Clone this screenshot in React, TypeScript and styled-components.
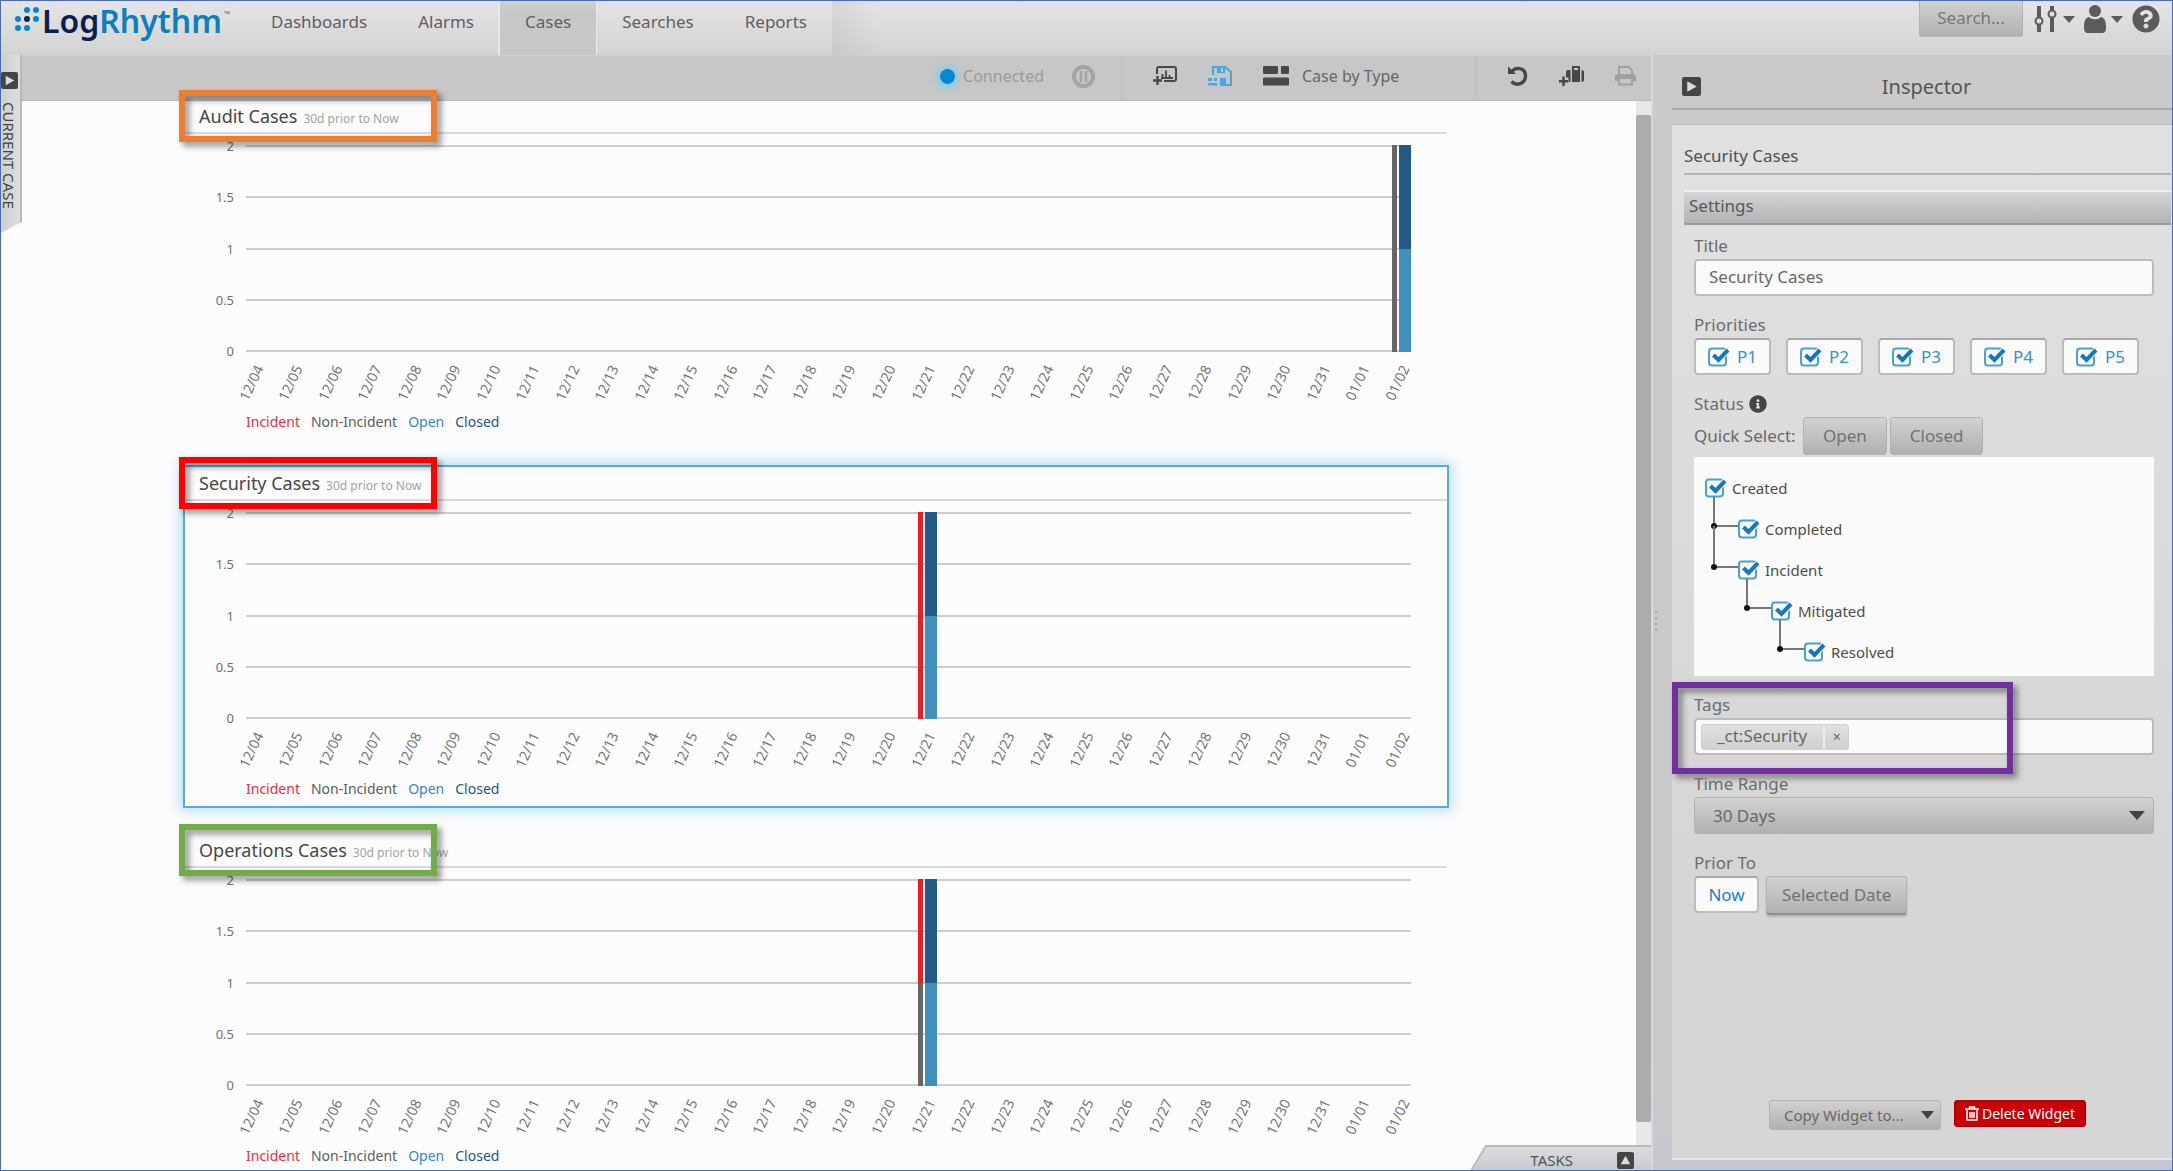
import React, { useState } from 'react';
import styled, { createGlobalStyle, css } from 'styled-components';
import { FaInfoCircle, FaQuestionCircle } from 'react-icons/fa';

const GlobalStyle = createGlobalStyle`
  *, *::before, *::after { box-sizing: border-box; }
  body { margin: 0; }
  body, button, input, select {
    font-family: "Noto Sans", "Open Sans", sans-serif;
    font-size: 17px;
    color: #686868;
  }
  h1, h2, h3, ul { margin: 0; padding: 0; font-weight: 400; }
  ul { list-style: none; }
  button, select { cursor: pointer; }
`;

const raised = css`
  border: 1px solid #b2b2b2;
  border-radius: 3px;
  background: linear-gradient(#d2d2d2, #b1b1b1);
`;

const Frame = styled.div`
  display: flex;
  flex-direction: column;
  height: 100vh;
  overflow: hidden;
  border: 1px solid #4b6bb0;
  background: #fcfcfc;
`;

/* ---------- header ---------- */

const Header = styled.header`
  display: flex;
  flex: none;
  height: 54px;
  background: linear-gradient(#dfdff4, #e3e2e2 14%, #d3d3d3);
`;

const Logo = styled.a`
  display: flex;
  align-items: flex-start;
  gap: 2px;
  width: 245px;
  padding: 5px 0 0 13px;
  font-size: 32px;
  line-height: 30px;
  font-weight: 600;
  color: #0d1f4d;
  text-decoration: none;
`;

const LogoAccent = styled.span`
  color: #0a7fc4;
`;

const LogoMark = styled.span`
  font-size: 8px;
  line-height: 16px;
  font-weight: 400;
  color: #0a7fc4;
`;

const Nav = styled.nav`
  display: flex;
  gap: 1px;
`;

const NavTab = styled.a<{ $active?: boolean }>`
  padding: 0 25px;
  font-size: 17px;
  line-height: 42px;
  color: #5f5f5f;
  text-decoration: none;
  ${({ $active }) =>
    $active &&
    css`
      background: linear-gradient(#d0d0d4, #c8c8c8 20%);
      box-shadow: -2px 0 #e8e8e8, 1px 0 #e8e8e8;
    `}
`;

const NavFade = styled.div`
  width: 46px;
  background: linear-gradient(90deg, rgba(0, 0, 0, 0.05), transparent);
`;

const HeaderTools = styled.div`
  display: flex;
  align-items: flex-start;
  margin-left: auto;
  padding-right: 12px;
`;

const SearchButton = styled.button`
  ${raised};
  width: 104px;
  height: 36px;
  margin-right: 11px;
  padding-bottom: 3px;
  border-top: 0;
  border-radius: 0 0 3px 3px;
  font-size: 17px;
  color: #777;
`;

const ToolButton = styled.button`
  display: flex;
  align-items: center;
  gap: 5px;
  margin-right: 9px;
  padding: 4px 0 0;
  border: 0;
  background: none;
  color: #5b5b5b;
  &:last-child { margin-right: 0; }
`;

/* ---------- workspace ---------- */

const Body = styled.div`
  display: flex;
  flex: 1;
  min-height: 0;
`;

const Workspace = styled.main`
  position: relative;
  display: flex;
  flex: 1;
  flex-direction: column;
  min-width: 0;
`;

const Toolbar = styled.div`
  display: flex;
  flex: none;
  justify-content: flex-end;
  height: 46px;
  border-top: 1px solid #cfcfcf;
  border-bottom: 1px solid #b9b9b9;
  background: #c7c7c7;
`;

const ToolGroup = styled.div<{ $wide?: boolean }>`
  display: flex;
  align-items: center;
  gap: 31px;
  width: ${({ $wide }) => ($wide ? 355 : 175)}px;
  padding: 0 14px 4px 31px;
  border-left: 1px solid #bdbdbd;
`;

const Connection = styled.div`
  display: flex;
  align-items: center;
  gap: 8px;
  padding: 0 26px 4px 0;
  font-size: 16px;
  color: #9b9b9b;
`;

const StatusDot = styled.span`
  width: 15px;
  height: 15px;
  border-radius: 50%;
  background: #0787cf;
  box-shadow: 0 0 7px 4px #8ccbea;
`;

const IconButton = styled.button<{ $faded?: boolean; $accent?: boolean }>`
  display: flex;
  padding: 0;
  border: 0;
  background: none;
  color: ${({ $faded, $accent }) => ($accent ? '#48a8e4' : $faded ? '#a0a0a0' : '#484848')};
`;

const PauseButton = styled(IconButton)`
  margin-left: 20px;
`;

const LayoutButton = styled(IconButton)`
  align-items: center;
  gap: 13px;
  font-size: 16px;
  color: #484848;
  span { color: #666; }
`;

const Canvas = styled.div`
  display: flex;
  flex: 1;
  min-height: 0;
`;

const WidgetColumn = styled.div`
  flex: 1;
  min-width: 0;
  margin-top: -3px;
  padding: 0 187px 0 182px;
`;

const ScrollTrack = styled.div`
  width: 15px;
  padding: 14px 0 48px;
  background: #e8e8e8;
`;

const ScrollThumb = styled.div`
  height: 100%;
  border-radius: 2px;
  background: #aeabae;
`;

/* ---------- side and bottom tabs ---------- */

const CaseTab = styled.button`
  position: absolute;
  top: 0;
  left: 0;
  display: flex;
  align-items: center;
  gap: 13px;
  width: 21px;
  height: 178px;
  padding: 17px 3px 0 0;
  border: 0;
  border-right: 2px solid #b8b8b8;
  background: linear-gradient(90deg, #cfcfcf, #dedede);
  clip-path: polygon(0 0, 100% 0, 100% 167px, 0 100%);
  writing-mode: vertical-rl;
  font-size: 15px;
  line-height: 16px;
  color: #444;
  svg { flex: none; }
`;

const TasksEdge = styled.div`
  position: absolute;
  right: 0;
  bottom: 0;
  padding: 2px 0 0 2px;
  background: #b9b9b9;
  clip-path: polygon(15px 0, 100% 0, 100% 100%, 0 100%);
`;

const TasksTab = styled.button`
  display: flex;
  align-items: center;
  gap: 44px;
  height: 23px;
  padding: 3px 17px 0 58px;
  border: 0;
  background: linear-gradient(#dcdcdc, #c9c9d6);
  clip-path: polygon(14px 0, 100% 0, 100% 100%, 0 100%);
  font-size: 15px;
  line-height: 20px;
  color: #555;
`;

/* ---------- chart widget ---------- */

const WidgetBox = styled.section<{ $selected?: boolean }>`
  position: relative;
  height: 343px;
  margin-bottom: 24px;
  border: 2px solid ${({ $selected }) => ($selected ? '#55addf' : 'transparent')};
  box-shadow: ${({ $selected }) => ($selected ? '0 0 12px 3px #b4def4' : 'none')};
`;

const WidgetHeader = styled.header`
  display: flex;
  align-items: baseline;
  gap: 6px;
  height: 34px;
  padding: 3px 0 0 14px;
  border-bottom: 2px solid #d9d9d9;
`;

const WidgetTitle = styled.h2`
  font-size: 18px;
  line-height: 26px;
  color: #474747;
`;

const WidgetNote = styled.span`
  font-size: 12px;
  color: #a3a3a3;
`;

const Chart = styled.div`
  display: grid;
  grid-template-columns: 61px 1fr;
  grid-template-rows: 207px 61px auto;
  padding: 11px 36px 0 0;
`;

const YAxis = styled.div`
  display: flex;
  flex-direction: column;
  justify-content: space-between;
  margin: -8px 0;
  padding-right: 12px;
  font-size: 13px;
  line-height: 18px;
  text-align: right;
  color: #707070;
`;

const Plot = styled.div`
  display: grid;
  > * { grid-area: 1 / 1; }
`;

const GridLines = styled.div`
  display: flex;
  flex-direction: column;
  justify-content: space-between;
`;

const GridLine = styled.div`
  height: 2px;
  background: #cdcdcd;
`;

const Days = styled.div`
  display: flex;
  justify-content: space-between;
`;

const DayBars = styled.div`
  display: flex;
  align-items: stretch;
  gap: 2px;
  width: 19px;
`;

const Stack = styled.div<{ $narrow?: boolean }>`
  display: flex;
  flex-direction: column;
  width: ${({ $narrow }) => ($narrow ? 5 : 12)}px;
`;

const Bar = styled.div<{ $color: string; $value: number }>`
  flex: ${({ $value }) => $value};
  background: ${({ $color }) => $color};
`;

const XLabels = styled(Days)`
  grid-column: 2;
  padding-top: 5px;
`;

const XLabel = styled.div`
  display: flex;
  justify-content: flex-end;
  width: 19px;
  padding-right: 6px;
  font-size: 14px;
  line-height: 18px;
  color: #757575;
  span {
    flex: none;
    align-self: flex-start;
    transform: rotate(-65deg);
    transform-origin: 100% 50%;
  }
`;

const Legend = styled.div`
  display: flex;
  grid-column: 2;
  gap: 11px;
  font-size: 14px;
  line-height: 18px;
`;

const LegendItem = styled.span<{ $color: string }>`
  color: ${({ $color }) => $color};
`;

const Callout = styled.div<{ $color: string }>`
  position: absolute;
  top: -10px;
  left: -6px;
  width: 258px;
  height: 52px;
  border: 6px solid ${({ $color }) => $color};
  filter: drop-shadow(4px 4px 3px rgba(0, 0, 0, 0.45));
  pointer-events: none;
`;

/* ---------- inspector ---------- */

const InspectorPane = styled.aside`
  position: relative;
  display: flex;
  flex: none;
  flex-direction: column;
  width: 521px;
  padding: 0 0 10px 19px;
  border-left: 2px solid #d9d9d9;
  background: linear-gradient(#cacaca, #cacaca 90%, #c6c6d0);
`;

const SplitGrip = styled.div`
  position: absolute;
  top: 556px;
  left: 2px;
  width: 2px;
  height: 22px;
  background: repeating-linear-gradient(#a8a8a8 0 2px, transparent 2px 6px);
`;

const InspectorHeader = styled.header`
  display: flex;
  align-items: center;
  height: 55px;
  padding: 10px 20px 0 10px;
  border-bottom: 2px solid #acacac;
`;

const InspectorTitle = styled.h1`
  flex: 1;
  font-size: 20px;
  line-height: 28px;
  text-align: center;
  color: #555;
`;

const Panel = styled.div`
  display: flex;
  flex: 1;
  flex-direction: column;
  margin-top: 14px;
  padding: 19px 1px 28px 12px;
  border-top: 1px solid #bbb;
  border-bottom: 2px solid #e6e6e6;
  background: linear-gradient(#e1e1e1, #d6d6d6 70%);
`;

const PanelTitle = styled.h2`
  padding-bottom: 5px;
  border-bottom: 2px solid #b4b4b4;
  font-size: 17px;
  line-height: 24px;
  color: #505050;
`;

const SectionBar = styled.h3`
  height: 35px;
  margin-top: 15px;
  padding-left: 5px;
  border-top: 2px solid #ededed;
  border-bottom: 2px solid #9d9d9d;
  background: linear-gradient(#d6d6d6, #b2b2b2);
  font-size: 17px;
  line-height: 27px;
  color: #585858;
`;

const Form = styled.div`
  display: flex;
  flex-direction: column;
  gap: 17px;
  padding: 9px 17px 0 10px;
`;

const Field = styled.div`
  position: relative;
`;

const FieldLabel = styled.label`
  display: flex;
  align-items: center;
  gap: 5px;
  height: 25px;
  padding-bottom: 2px;
  color: #6c6c6c;
`;

const box = css`
  width: 100%;
  height: 37px;
  border: 2px solid #bcbcbc;
  border-radius: 4px;
  background: #fafafa;
`;

const TextInput = styled.input`
  ${box};
  padding: 0 13px 2px;
`;

const PriorityRow = styled.div`
  display: flex;
  gap: 15px;
`;

const PriorityBox = styled.label`
  ${box};
  display: flex;
  align-items: center;
  gap: 7px;
  width: 77px;
  padding-left: 12px;
  border-top-color: #a8a8a8;
  color: #3991c9;
`;

const CheckWrap = styled.span`
  display: grid;
  flex: none;
  width: 22px;
  height: 20px;
  > * { grid-area: 1 / 1; margin: 0; }
  input { width: 20px; height: 20px; opacity: 0; }
`;

const QuickRow = styled.div`
  display: flex;
  align-items: center;
  gap: 3px;
  height: 38px;
  margin-bottom: 2px;
`;

const QuickLabel = styled.span`
  width: 106px;
  padding-bottom: 2px;
`;

const GreyButton = styled.button`
  ${raised};
  height: 38px;
  padding: 0 19px 1px;
  font-size: 17px;
  color: #727272;
`;

const NowButton = styled.button`
  ${box};
  width: 65px;
  border-top-color: #a8a8a8;
  color: #1583c9;
`;

const DateButton = styled(GreyButton)`
  height: 39px;
  padding: 0 15px 1px;
  border-bottom: 2px solid #8d8d8d;
  box-shadow: 0 2px 2px rgba(0, 0, 0, 0.15);
`;

const ButtonRow = styled.div`
  display: flex;
  gap: 7px;
`;

const TreeBox = styled.div`
  height: 219px;
  padding: 10px 11px;
  background: #fafafa;
`;

const TreeList = styled.ul`
  & & { padding-left: 33px; }
`;

const TreeItem = styled.li`
  position: relative;
  & &::before {
    content: "";
    position: absolute;
    top: -11px;
    left: -25px;
    width: 25px;
    height: 30px;
    border: solid #777;
    border-width: 0 0 2px 2px;
  }
  & & + &::before { top: -23px; height: 42px; }
  & &::after {
    content: "";
    position: absolute;
    top: 15px;
    left: -27px;
    width: 6px;
    height: 6px;
    border-radius: 50%;
    background: #111;
  }
`;

const TreeRow = styled.label`
  display: flex;
  align-items: center;
  gap: 5px;
  height: 41px;
  font-size: 15px;
  color: #4c4c4c;
`;

const TagBox = styled.div`
  ${box};
  display: flex;
  align-items: center;
  padding-left: 5px;
`;

const Tag = styled.span`
  display: flex;
  height: 26px;
  border: 1px solid #d0d0d0;
  border-radius: 3px;
  background: linear-gradient(#e0e0e0, #d0d0d0);
  line-height: 22px;
  padding-left: 15px;
`;

const TagRemove = styled.button`
  width: 25px;
  margin-left: 16px;
  padding: 0;
  border: 0;
  border-left: 2px solid #ebebeb;
  background: none;
  font-size: 14px;
  line-height: 23px;
`;

const TagInput = styled.input`
  flex: 1;
  min-width: 0;
  border: 0;
  outline: 0;
  background: none;
`;

const TagCallout = styled(Callout)`
  top: -11px;
  left: -22px;
  width: 341px;
  height: 92px;
`;

const SelectWrap = styled.div<{ $small?: boolean }>`
  display: grid;
  align-items: center;
  width: ${({ $small }) => ($small ? '172px' : '100%')};
  > * { grid-area: 1 / 1; }
  svg {
    justify-self: end;
    margin-right: ${({ $small }) => ($small ? 7 : 9)}px;
    pointer-events: none;
  }
  select {
    ${raised};
    appearance: none;
    width: 100%;
    height: ${({ $small }) => ($small ? 30 : 37)}px;
    padding: 0 30px 0 ${({ $small }) => ($small ? 14 : 18)}px;
    font-size: ${({ $small }) => ($small ? 15 : 17)}px;
  }
`;

const Actions = styled.div`
  display: flex;
  align-items: flex-start;
  gap: 13px;
  margin-top: auto;
  padding-left: 85px;
`;

const DeleteButton = styled.button`
  display: flex;
  align-items: center;
  gap: 3px;
  height: 27px;
  padding: 0 10px;
  border: 1px solid #a80000;
  border-radius: 3px;
  background: #cb0000;
  font-size: 14px;
  color: #fff;
`;

/* ---------- drawings ---------- */

const LogoDots = () => (
  <svg width="26" height="26" viewBox="0 0 26 26" fill="#0a86c8" aria-hidden="true">
    <circle cx="13" cy="4" r="3" />
    <circle cx="22" cy="4" r="3" />
    <circle cx="4" cy="13" r="3" />
    <circle cx="13" cy="13" r="3" fill="#0d1f4d" />
    <circle cx="22" cy="13" r="3" />
    <circle cx="4" cy="22" r="3" />
    <circle cx="13" cy="22" r="3" />
  </svg>
);

const Caret = ({ w = 12, h = 7, color = 'currentColor' }: { w?: number; h?: number; color?: string }) => (
  <svg width={w} height={h} viewBox="0 0 12 7" preserveAspectRatio="none" aria-hidden="true">
    <path d="M0 0h12L6 7z" fill={color} />
  </svg>
);

const SlidersIcon = () => (
  <svg width="24" height="28" viewBox="0 0 24 28" fill="none" stroke="currentColor" aria-hidden="true">
    <path d="M5 1v11M5 20v7M18 1v4M18 12v15" strokeWidth="4" />
    <circle cx="5" cy="16" r="3.500" strokeWidth="2" fill="#ddd" />
    <circle cx="18" cy="9" r="3.500" strokeWidth="2" fill="#ddd" />
  </svg>
);

const UserIcon = () => (
  <svg width="22" height="28" viewBox="0 0 22 28" fill="currentColor" aria-hidden="true">
    <circle cx="11" cy="6" r="6" />
    <path d="M5 12c3 3 9 3 12 0 4 1 5 5 5 10 0 4-1 6-4 6H4c-3 0-4-2-4-6 0-5 1-9 5-10z" />
  </svg>
);

const PlayBox = ({ up, size = 19 }: { up?: boolean; size?: number }) => (
  <svg width={size} height={size} viewBox="0 0 18 18" aria-hidden="true">
    <rect width="18" height="18" rx="2" fill="#454545" />
    <path d={up ? 'M4 13h10L9 4z' : 'M5 4v10l9-5z'} fill="#dcdcdc" />
  </svg>
);

const PauseIcon = () => (
  <svg width="23" height="23" viewBox="0 0 23 23" aria-hidden="true">
    <circle cx="11.5" cy="11.5" r="9.5" fill="none" stroke="#a4a4a4" strokeWidth="4" />
    <path d="M9 6v11M14 6v11" stroke="#a4a4a4" strokeWidth="2.6" />
  </svg>
);

const AddWidgetIcon = () => (
  <svg width="24" height="20" viewBox="0 0 24 20" fill="none" stroke="currentColor" strokeWidth="2" aria-hidden="true">
    <path d="M4 8V3q0-2 2-2h15q2 0 2 2v10q0 2-2 2H11" />
    <path d="M0 14.5h9M4.500 10v9" strokeWidth="2.4" />
    <path d="M9.500 12V8M13 12V4.500M16.500 12V9M8 12h12" strokeWidth="1.800" />
  </svg>
);

const SaveIcon = () => (
  <svg width="24" height="20" viewBox="0 0 24 20" aria-hidden="true">
    <path d="M5 9V1h12l6 5v13H12" fill="none" stroke="currentColor" strokeWidth="2.200" />
    <path d="M9 1h8v6H9z" fill="currentColor" />
    <path d="M13 2h2v4h-2z" fill="#c7c7c7" />
    <path d="M12 12h6v6h-6z" fill="currentColor" />
    <path d="M0 12h4v3H0zM6 12h3v3H6zM0 17h9v2.500H0z" fill="currentColor" />
  </svg>
);

const LayoutIcon = () => (
  <svg width="26" height="20" viewBox="0 0 26 20" fill="currentColor" aria-hidden="true">
    <rect width="15" height="8" rx="1" />
    <rect x="18" width="8" height="8" rx="1" />
    <rect y="11.500" width="26" height="8" rx="1" />
  </svg>
);

const UndoIcon = () => (
  <svg width="20" height="20" viewBox="0 0 20 20" aria-hidden="true">
    <path d="M4 5.500C7 1 17 1 17.500 9.500 17.500 18 8 20.500 3.500 15.500" fill="none" stroke="currentColor" strokeWidth="3.400" />
    <path d="M0 .5V8h8z" fill="currentColor" />
  </svg>
);

const AddCaseIcon = () => (
  <svg width="25" height="20" viewBox="0 0 25 20" fill="currentColor" aria-hidden="true">
    <path d="M14 4V1h6v3" fill="none" stroke="currentColor" strokeWidth="2" />
    <path d="M13 4h8v12h-8z" />
    <path d="M7 9V6q0-2 2-2h2.500v12H9.500v-4L7 11zM22.500 4q2.500 0 2.500 2v8q0 2-2.500 2z" />
    <path d="M0 14h9v2.500H0z" />
    <path d="M3.300 10.500h2.500V20H3.300z" />
  </svg>
);

const PrinterIcon = () => (
  <svg width="21" height="20" viewBox="0 0 21 20" aria-hidden="true">
    <path d="M4 10V1h10l3 3.500V10" fill="none" stroke="currentColor" strokeWidth="1.800" />
    <path d="M2.500 8h16Q21 8.500 21 11v4h-3v-2H3v2H0v-4q0-2.500 2.500-3z" fill="currentColor" />
    <path d="M4 13v5.500h13V13" fill="none" stroke="currentColor" strokeWidth="1.800" />
  </svg>
);

const TrashIcon = () => (
  <svg width="14" height="15" viewBox="0 0 14 15" fill="none" stroke="#fff" strokeWidth="1.500" aria-hidden="true">
    <path d="M0 3h14M4.500 3V1h5v2M2 4v10h10V4M5 6v6M7 6v6M9 6v6" />
  </svg>
);

const CheckMark = ({ on }: { on: boolean }) => (
  <svg width="22" height="20" viewBox="0 0 22 20" fill="none" aria-hidden="true">
    <rect x="1" y="1.500" width="17" height="17" rx="3" stroke="#4b9fd3" strokeWidth="2" />
    {on && (
      <>
        <path d="M6.500 8.500L11 13 20 3" stroke="#fafafa" strokeWidth="6" />
        <path d="M5.500 8L10.500 13 20 3" stroke="#1378bc" strokeWidth="4" />
      </>
    )}
  </svg>
);

const Check = () => {
  const [on, setOn] = useState(true);
  return (
    <CheckWrap>
      <CheckMark on={on} />
      <input type="checkbox" checked={on} onChange={() => setOn(!on)} />
    </CheckWrap>
  );
};

/* ---------- data ---------- */

const RED = '#ee1c25';
const GREY = '#666666';
const LIGHT = '#3f8fbf';
const DARK = '#225a87';

const DATES = [
  ...Array.from({ length: 28 }, (_, i) => `12/${String(i + 4).padStart(2, '0')}`),
  '01/01',
  '01/02',
];

type Segment = { color: string; value: number };
type Widget = {
  title: string;
  day: string;
  kind: Segment[];
  callout: string;
  selected?: boolean;
};

const STATE: Segment[] = [
  { color: DARK, value: 1 },
  { color: LIGHT, value: 1 },
];

const WIDGETS: Widget[] = [
  { title: 'Audit Cases', day: '01/02', kind: [{ color: GREY, value: 2 }], callout: '#ed7d31' },
  { title: 'Security Cases', day: '12/21', kind: [{ color: RED, value: 2 }], callout: '#fe0000', selected: true },
  {
    title: 'Operations Cases',
    day: '12/21',
    kind: [
      { color: RED, value: 1 },
      { color: GREY, value: 1 },
    ],
    callout: '#70ad47',
  },
];

const BarStack = ({ segments, narrow }: { segments: Segment[]; narrow?: boolean }) => (
  <Stack $narrow={narrow}>
    {segments.map((s) => (
      <Bar key={s.color} $color={s.color} $value={s.value} />
    ))}
  </Stack>
);

const ChartWidget = ({ title, day, kind, callout, selected }: Widget) => (
  <WidgetBox $selected={selected}>
    <WidgetHeader>
      <WidgetTitle>{title}</WidgetTitle>
      <WidgetNote>30d prior to Now</WidgetNote>
    </WidgetHeader>
    <Chart>
      <YAxis>
        {['2', '1.5', '1', '0.5', '0'].map((v) => (
          <span key={v}>{v}</span>
        ))}
      </YAxis>
      <Plot>
        <GridLines>
          {[0, 1, 2, 3, 4].map((n) => (
            <GridLine key={n} />
          ))}
        </GridLines>
        <Days>
          {DATES.map((d) => (
            <DayBars key={d}>
              {d === day && (
                <>
                  <BarStack segments={kind} narrow />
                  <BarStack segments={STATE} />
                </>
              )}
            </DayBars>
          ))}
        </Days>
      </Plot>
      <XLabels>
        {DATES.map((d) => (
          <XLabel key={d}>
            <span>{d}</span>
          </XLabel>
        ))}
      </XLabels>
      <Legend>
        <LegendItem $color="#ee2f3c">Incident</LegendItem>
        <LegendItem $color="#5c5c5c">Non-Incident</LegendItem>
        <LegendItem $color="#3588c2">Open</LegendItem>
        <LegendItem $color="#1f5584">Closed</LegendItem>
      </Legend>
    </Chart>
    <Callout $color={callout} />
  </WidgetBox>
);

type Node = { name: string; children?: Node[] };

const STATUS_TREE: Node[] = [
  {
    name: 'Created',
    children: [
      { name: 'Completed' },
      { name: 'Incident', children: [{ name: 'Mitigated', children: [{ name: 'Resolved' }] }] },
    ],
  },
];

const StatusTree = ({ nodes }: { nodes: Node[] }) => (
  <TreeList>
    {nodes.map((n) => (
      <TreeItem key={n.name}>
        <TreeRow>
          <Check />
          {n.name}
        </TreeRow>
        {n.children && <StatusTree nodes={n.children} />}
      </TreeItem>
    ))}
  </TreeList>
);

const Inspector = () => (
  <InspectorPane>
    <SplitGrip />
    <InspectorHeader>
      <IconButton aria-label="Collapse inspector">
        <PlayBox />
      </IconButton>
      <InspectorTitle>Inspector</InspectorTitle>
    </InspectorHeader>
    <Panel>
      <PanelTitle>Security Cases</PanelTitle>
      <SectionBar>Settings</SectionBar>
      <Form>
        <Field>
          <FieldLabel htmlFor="title">Title</FieldLabel>
          <TextInput id="title" defaultValue="Security Cases" />
        </Field>
        <Field>
          <FieldLabel as="div">Priorities</FieldLabel>
          <PriorityRow>
            {['P1', 'P2', 'P3', 'P4', 'P5'].map((p) => (
              <PriorityBox key={p}>
                <Check />
                {p}
              </PriorityBox>
            ))}
          </PriorityRow>
        </Field>
        <Field>
          <FieldLabel as="div">
            Status
            <FaInfoCircle size={18} color="#454545" />
          </FieldLabel>
          <QuickRow>
            <QuickLabel>Quick Select:</QuickLabel>
            <GreyButton>Open</GreyButton>
            <GreyButton>Closed</GreyButton>
          </QuickRow>
          <TreeBox>
            <StatusTree nodes={STATUS_TREE} />
          </TreeBox>
        </Field>
        <Field>
          <FieldLabel htmlFor="tags">Tags</FieldLabel>
          <TagBox>
            <Tag>
              _ct:Security
              <TagRemove aria-label="Remove tag">×</TagRemove>
            </Tag>
            <TagInput id="tags" />
          </TagBox>
          <TagCallout $color="#7030a0" />
        </Field>
        <Field>
          <FieldLabel htmlFor="range">Time Range</FieldLabel>
          <SelectWrap>
            <select id="range">
              <option>30 Days</option>
            </select>
            <Caret w={16} h={9} color="#444" />
          </SelectWrap>
        </Field>
        <Field>
          <FieldLabel as="div">Prior To</FieldLabel>
          <ButtonRow>
            <NowButton>Now</NowButton>
            <DateButton>Selected Date</DateButton>
          </ButtonRow>
        </Field>
      </Form>
      <Actions>
        <SelectWrap $small>
          <select aria-label="Copy widget">
            <option>Copy Widget to...</option>
          </select>
          <Caret w={13} h={8} color="#444" />
        </SelectWrap>
        <DeleteButton>
          <TrashIcon />
          Delete Widget
        </DeleteButton>
      </Actions>
    </Panel>
  </InspectorPane>
);

export default function App() {
  return (
    <Frame>
      <GlobalStyle />
      <Header>
        <Logo href="#">
          <LogoDots />
          <span>
            Log<LogoAccent>Rhythm</LogoAccent>
          </span>
          <LogoMark>™</LogoMark>
        </Logo>
        <Nav>
          {['Dashboards', 'Alarms', 'Cases', 'Searches', 'Reports'].map((t) => (
            <NavTab key={t} href="#" $active={t === 'Cases'}>
              {t}
            </NavTab>
          ))}
        </Nav>
        <NavFade />
        <HeaderTools>
          <SearchButton>Search...</SearchButton>
          <ToolButton aria-label="Preferences">
            <SlidersIcon />
            <Caret />
          </ToolButton>
          <ToolButton aria-label="Account">
            <UserIcon />
            <Caret />
          </ToolButton>
          <ToolButton aria-label="Help">
            <FaQuestionCircle size={28} />
          </ToolButton>
        </HeaderTools>
      </Header>
      <Body>
        <Workspace>
          <Toolbar>
            <Connection>
              <StatusDot />
              Connected
              <PauseButton aria-label="Pause">
                <PauseIcon />
              </PauseButton>
            </Connection>
            <ToolGroup $wide>
              <IconButton aria-label="Add widget">
                <AddWidgetIcon />
              </IconButton>
              <IconButton $accent aria-label="Save layout">
                <SaveIcon />
              </IconButton>
              <LayoutButton>
                <LayoutIcon />
                <span>Case by Type</span>
              </LayoutButton>
            </ToolGroup>
            <ToolGroup>
              <IconButton aria-label="Undo">
                <UndoIcon />
              </IconButton>
              <IconButton aria-label="Add to case">
                <AddCaseIcon />
              </IconButton>
              <IconButton $faded aria-label="Print">
                <PrinterIcon />
              </IconButton>
            </ToolGroup>
          </Toolbar>
          <Canvas>
            <WidgetColumn>
              {WIDGETS.map((w) => (
                <ChartWidget key={w.title} {...w} />
              ))}
            </WidgetColumn>
            <ScrollTrack>
              <ScrollThumb />
            </ScrollTrack>
          </Canvas>
          <CaseTab>
            <PlayBox size={17} />
            CURRENT CASE
          </CaseTab>
          <TasksEdge>
            <TasksTab>
              TASKS
              <PlayBox up size={17} />
            </TasksTab>
          </TasksEdge>
        </Workspace>
        <Inspector />
      </Body>
    </Frame>
  );
}
